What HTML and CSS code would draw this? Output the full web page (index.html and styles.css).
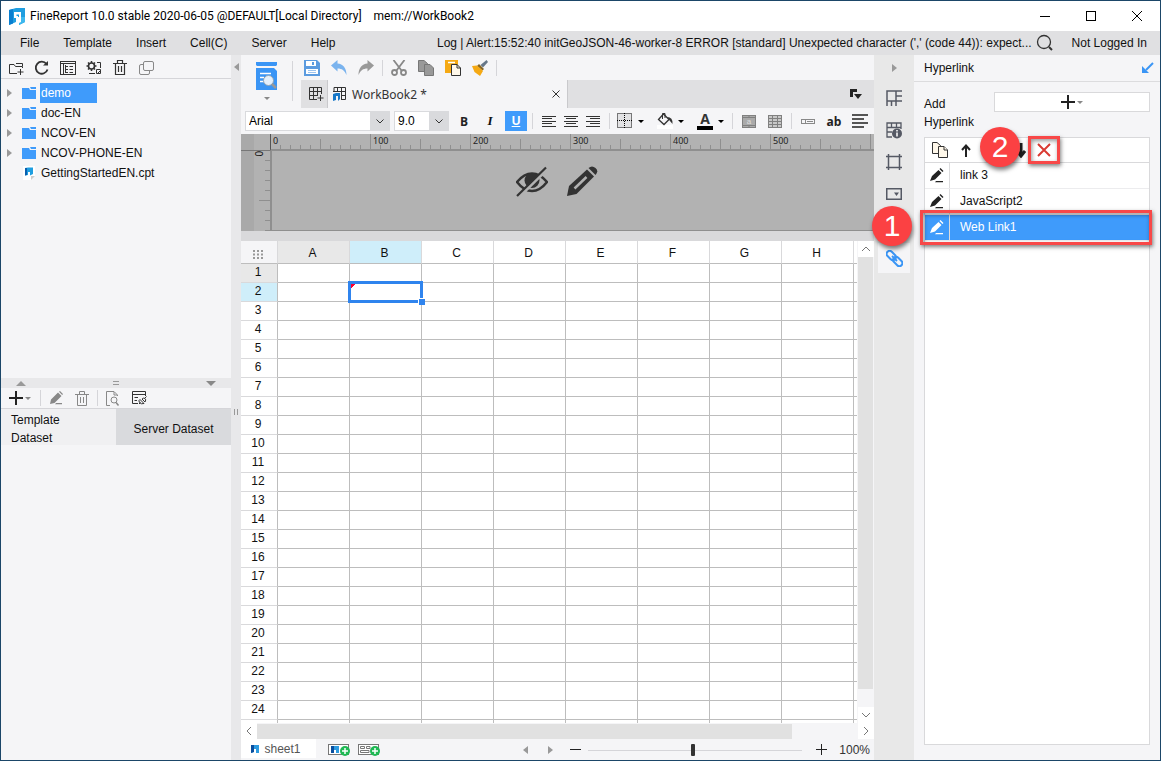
FILE: index.html
```html
<!DOCTYPE html>
<html lang="en">
<head>
    <meta charset="UTF-8">
    <meta name="viewport" content="width=device-width, initial-scale=1.0">
    <title>FineReport 10.0</title>
    <link rel="stylesheet" href="styles.css">
</head>

<body>

<div class="window">

    <header class="titlebar">
        <svg class="app-logo" width="16" height="17" viewBox="0 0 16 17">
            <path d="M0 2 L7 0 H16 V14 L10 17 V9 H7 V14 L0 17Z" fill="#1f9ee0"/>
            <path d="M0 2 L4 1 V15.500 L0 17Z" fill="#0a7fd0"/>
            <path d="M10 9 H16 V14 L10 17Z" fill="#3db8ee"/>
            <path d="M5 4 H12 V14 L10 15 V6.500 H7.500 V8 H9 V10 H5Z" fill="#fff"/>
        </svg>
        <h1 class="title">FineReport 10.0 stable 2020-06-05 @DEFAULT[Local Directory]&nbsp;&nbsp;&nbsp; mem://WorkBook2</h1>
        <div class="window-buttons">
            <button aria-label="Minimize"><svg width="12" height="12"><path d="M1 6.500H11" stroke="#000"/></svg></button>
            <button aria-label="Maximize"><svg width="12" height="12"><rect x="1.500" y="1.500" width="9" height="9" fill="none" stroke="#000"/></svg></button>
            <button aria-label="Close"><svg width="12" height="12"><path d="M1 1L11 11M11 1L1 11" stroke="#000"/></svg></button>
        </div>
    </header>

    <nav class="menubar">
        <button>File</button>
        <button>Template</button>
        <button>Insert</button>
        <button>Cell(C)</button>
        <button>Server</button>
        <button>Help</button>
        <p class="log">Log | Alert:15:52:40 initGeoJSON-46-worker-8 ERROR [standard] Unexpected character (',' (code 44)): expect...</p>
        <button class="search" aria-label="Search"><svg width="18" height="18" fill="none" stroke="#333" stroke-width="1.300"><circle cx="8" cy="8" r="6.500"/><path d="M13 13L16 16" stroke-width="2"/></svg></button>
        <button class="login">Not Logged In</button>
    </nav>

    <main class="workspace">

        <aside class="left">
            <div class="toolbar tree-tools">
                <button aria-label="New folder"><svg width="16" height="14" fill="none" stroke="#333"><path d="M9 12.500H1.500V3.500H6L7.500 5.500H14.500V7M8 2.500H14.500V5M12.500 8V14M9.500 11H15.500"/></svg></button>
                <button aria-label="Refresh"><svg width="16" height="16" fill="none" stroke="#333" stroke-width="1.800"><path d="M12.500 4A6 6 0 1 0 13.500 9.500"/><path d="M9 5.500H14V1Z" fill="#333" stroke="none"/></svg></button>
                <button aria-label="Show list"><svg width="16" height="14" fill="none" stroke="#333"><rect x=".5" y=".5" width="15" height="13"/><path d="M0 2.500H16M3.500 3V13M5.500 4V12M5.500 5.500H8M5.500 8.500H8M5.500 11.500H8M9.500 5.500H13M9.500 8.500H13M9.500 11.500H13"/></svg></button>
                <button aria-label="Settings"><svg width="16" height="14" fill="none" stroke="#333"><circle cx="5.500" cy="5" r="3" stroke-width="1.600"/><path d="M5.500 0V2M5.500 8V10M.5 5H2.500M8.500 5H10.500M2 1.500L3.500 3M7.500 7L9 8.500M9 1.500L7.500 3M3.500 7L2 8.500" stroke-width="1.500"/><path d="M11 1.500H14.500V7M3 12.500H9M10.500 8.500H14.500V12.500H10.500ZM12 12L15 9"/></svg></button>
                <button aria-label="Delete"><svg width="14" height="15" fill="none" stroke="#333"><path d="M0 3.500H14M4.500 3V.5H9.500V3M2.500 4V14.500H11.500V4M5.500 6V12M8.500 6V12" stroke-width="1.200"/></svg></button>
                <button aria-label="Copy"><svg width="15" height="14" fill="none" stroke="#888"><rect x="4.500" y=".5" width="10" height="9" rx="1.500"/><path d="M4 3.500H2Q.5 3.500 .5 5V12Q.5 13.500 2 13.500H9Q10.500 13.500 10.500 12V10"/></svg></button>
            </div>
            <ul class="tree">
                <li class="selected"><i class="tri-right"></i><svg width="14" height="12"><path d="M0 1H7L8 3H14V12H0Z" fill="#3f9bfb"/><path d="M8 0H14V2H9Z" fill="#3f9bfb"/></svg><span>demo</span></li>
                <li><i class="tri-right"></i><svg width="14" height="12"><path d="M0 1H7L8 3H14V12H0Z" fill="#3f9bfb"/><path d="M8 0H14V2H9Z" fill="#3f9bfb"/></svg><span>doc-EN</span></li>
                <li><i class="tri-right"></i><svg width="14" height="12"><path d="M0 1H7L8 3H14V12H0Z" fill="#3f9bfb"/><path d="M8 0H14V2H9Z" fill="#3f9bfb"/></svg><span>NCOV-EN</span></li>
                <li><i class="tri-right"></i><svg width="14" height="12"><path d="M0 1H7L8 3H14V12H0Z" fill="#3f9bfb"/><path d="M8 0H14V2H9Z" fill="#3f9bfb"/></svg><span>NCOV-PHONE-EN</span></li>
                <li><i></i><svg width="14" height="14"><path d="M1 0H13V10L9 14H1Z" fill="#fff"/><path d="M9 14V10H13Z" fill="#ccc"/><path d="M3 2L6 1.500H11V8L8 9.500V6H6V9L3 9.500Z" fill="#1f9ee0"/><path d="M3 2H5V9L3 9.500Z" fill="#0a5fae"/></svg><span>GettingStartedEN.cpt</span></li>
            </ul>
            <div class="h-splitter"><i class="tri-up"></i><svg width="8" height="6"><path d="M1 1.500H7M1 4.500H7" stroke="#999"/></svg><i class="tri-down big"></i></div>
            <div class="toolbar dataset-tools">
                <button class="add" aria-label="Add dataset"><svg width="14" height="14"><path d="M7 0V14M0 7H14" stroke="#222" stroke-width="2"/></svg><i class="tri-down"></i></button>
                <span class="sep"></span>
                <button aria-label="Edit"><svg width="15" height="14" fill="#888"><path d="M1 13L2 8.500L9 1.500L12.500 5L5.500 12ZM10 .8L11 0L14 3L13.200 4ZM7 12H13V13.200H6Z"/></svg></button>
                <button aria-label="Delete"><svg width="14" height="15" fill="none" stroke="#888"><path d="M0 3.500H14M4.500 3V.5H9.500V3M2.500 4V14.500H11.500V4M5.500 6V12M8.500 6V12"/></svg></button>
                <span class="sep"></span>
                <button aria-label="Preview"><svg width="14" height="15" fill="none" stroke="#888"><path d="M4 14.500H.5V.5H8L11.500 4V5M8 1V4H11"/><circle cx="8" cy="9" r="3"/><path d="M10 11.500L12.500 14.500" stroke-width="1.500"/></svg></button>
                <button aria-label="Connection"><svg width="15" height="14" fill="none" stroke="#333"><path d="M6 12.500H.5V.5H13.500V5M0 3.500H13.500M2.500 6.500H6M2.500 9.500H5"/><path d="M7 13L8.500 11.500M8 8.500L12 12.500Q9 13.500 7.500 11.500T8 8.500ZM10 8L13 11Q14.500 8.500 13 7.500T10 8ZM13 7L14.500 5.500"/></svg></button>
            </div>
            <div class="dataset-tabs">
                <button>Template Dataset</button>
                <button class="active">Server Dataset</button>
            </div>
        </aside>

        <div class="v-splitter"><i class="tri-left"></i><svg width="4" height="7"><path d="M.5 0V6M3.500 0V6" stroke="#999"/></svg></div>

        <section class="center">
            <div class="top-tools">
                <button class="preview" aria-label="Preview">
                    <svg width="22" height="28"><path d="M0 0H21V3L20 4H1L0 3ZM0 6H18L21 9V28H0Z" fill="#3a95f5"/><path d="M4 11.500H15M4 15.500H8M4 19.500H8" stroke="#fff" stroke-width="1.500"/><circle cx="12.500" cy="18.500" r="5" fill="#e4f0fc" stroke="#8fa3b5"/><path d="M16 22L20 26" stroke="#999" stroke-width="2.500"/></svg>
                    <i class="tri-down"></i>
                </button>
                <div class="top-right">
                    <div class="toolbar quick-tools">
                        <button aria-label="Save"><svg width="16" height="16"><path d="M0 0H13L16 3V16H0Z" fill="#5b9bdf"/><path d="M2 1H12V6H2ZM2 9H14V14H2Z" fill="#fff"/><path d="M8 2H10V5H8Z" fill="#5b9bdf"/><path d="M4 10.500H12M4 12.500H12" stroke="#9cc3ee"/></svg></button>
                        <button aria-label="Undo"><svg width="16" height="15"><path d="M0 5.500L6.500 0V3.500C12 4 15.500 8 15.500 15C13.500 10.500 11 8.500 6.500 8.500V11.500Z" fill="#7ab3ee"/></svg></button>
                        <button aria-label="Redo"><svg width="16" height="15"><path d="M16 5.500L9.500 0V3.500C4 4 .5 8 .5 15C2.500 10.500 5 8.500 9.500 8.500V11.500Z" fill="#999"/></svg></button>
                        <span class="sep"></span>
                        <button aria-label="Cut"><svg width="16" height="16" fill="none" stroke="#888" stroke-width="1.800"><circle cx="3.500" cy="12.500" r="2.500"/><circle cx="12.500" cy="12.500" r="2.500"/><path d="M2.500 0L10.500 10.500M13.500 0L5.500 10.500"/></svg></button>
                        <button aria-label="Copy"><svg width="17" height="16" fill="#999" stroke="#777"><path d="M.5 .5H6L9.500 3.500V11.500H.5Z"/><path d="M6.500 4.500H12L15.500 8V15.500H6.500Z"/></svg></button>
                        <button aria-label="Paste"><svg width="17" height="16"><path d="M0 0H13V13H0Z" fill="#f5a914"/><path d="M3 2.500H10" stroke="#fff" stroke-width="1.500"/><path d="M6.500 4.500H12L15.500 8V15.500H6.500Z" fill="#fff8ea" stroke="#333"/><path d="M12 4.500V8H15.500" fill="none" stroke="#333"/></svg></button>
                        <button aria-label="Format painter"><svg width="16" height="16"><path d="M14.500 0L16 2L11 7.500L8.500 5Z" fill="#667788"/><path d="M7 4L12 9L10.500 10.500L5 6Z" fill="#886622"/><path d="M0 6L5 5.500L11 11L8 16L2.500 12Z" fill="#f5a914"/></svg></button>
                        <span class="sep"></span>
                    </div>
                    <div class="file-tabs">
                        <button class="new-tab" aria-label="New workbook"><svg width="15" height="14" fill="none" stroke="#333"><path d="M8 12.500H.5V.5H12.500V7M0 4.500H13M0 8.500H8M4.500 0V13M8.500 0V9M11.500 8V14M8.500 11H14.500"/></svg></button>
                        <div class="file-tab">
                            <svg width="14" height="14" fill="none" stroke="#333"><path d="M1 5V.5H12.500V12.500H8M0 4.500H13M8 8.500H13M4.500 0V5M8.500 0V12"/><path d="M0 7L3 6H7V12L5 14V9H3V13L0 14Z" fill="#1878c8" stroke="none"/></svg>
                            <span>WorkBook2 *</span>
                            <button aria-label="Close tab"><svg width="8" height="8"><path d="M.5 .5L7.500 7.500M7.500 .5L.5 7.500" stroke="#333"/></svg></button>
                        </div>
                        <button class="tab-list" aria-label="Open tabs"><svg width="12" height="10" fill="#222"><path d="M0 0H7V3H3V8H0ZM4 5H12L8 10Z"/></svg></button>
                    </div>
                </div>
            </div>

            <div class="toolbar format-tools">
                <label class="combo font-name"><select aria-label="Font"><option>Arial</option></select><span><svg width="8" height="5" fill="none" stroke="#333"><path d="M.5 .5L4 4L7.500 .5"/></svg></span></label>
                <label class="combo font-size"><select aria-label="Font size"><option>9.0</option></select><span><svg width="8" height="5" fill="none" stroke="#333"><path d="M.5 .5L4 4L7.500 .5"/></svg></span></label>
                <button class="bold">B</button>
                <button class="italic">I</button>
                <button class="underline active">U</button>
                <span class="sep"></span>
                <div class="group">
                    <button aria-label="Align left"><svg width="14" height="11" stroke="#333"><path d="M0 .5H14M0 2.500H10M0 5.500H14M0 7.500H10M0 10.500H14"/></svg></button>
                    <button aria-label="Align center"><svg width="14" height="11" stroke="#333"><path d="M0 .5H14M2 2.500H12M0 5.500H14M2 7.500H12M0 10.500H14"/></svg></button>
                    <button aria-label="Align right"><svg width="14" height="11" stroke="#333"><path d="M0 .5H14M4 2.500H14M0 5.500H14M4 7.500H14M0 10.500H14"/></svg></button>
                </div>
                <span class="sep"></span>
                <div class="group drop-group">
                    <button class="drop" aria-label="Borders"><svg width="16" height="16" fill="#e2e2e4" stroke="#000" stroke-dasharray="1 1"><rect x=".5" y=".5" width="14" height="14"/><path d="M7.500 0V15M0 7.500H15"/></svg><i class="tri-down"></i></button>
                    <button class="drop" aria-label="Fill colour"><svg width="16" height="16"><path d="M0 12H16V16H0Z" fill="#fff"/><path d="M6.500 1L12 6.500L7 11.500L1.500 6.500Z" fill="none" stroke="#333" stroke-width="1.300"/><path d="M5.500 6V.5H8V5" fill="none" stroke="#333"/><path d="M10 4Q16 4 15.500 11L13 8L11.500 6Z" fill="#333"/></svg><i class="tri-down"></i></button>
                    <button class="drop font-color" aria-label="Font colour"><b>A</b><i class="tri-down"></i></button>
                </div>
                <span class="sep"></span>
                <button aria-label="Merge cells"><svg width="14" height="13" fill="#aaa" stroke="#808080"><rect x=".5" y=".5" width="13" height="12"/><path d="M0 2.500H14M0 10.500H14M7 0V2M7 11V13"/><text x="7" y="9" font-size="8" text-anchor="middle" fill="#ddd" stroke="none">a</text></svg></button>
                <button aria-label="Unmerge cells"><svg width="14" height="13" fill="#c8c8c8" stroke="#808080"><rect x=".5" y=".5" width="13" height="12"/><path d="M0 3.500H14M0 6.500H14M0 9.500H14M4.500 0V13M9.500 0V13"/></svg></button>
                <span class="sep"></span>
                <button aria-label="Cell widget"><svg width="14" height="5" fill="none" stroke="#888"><rect x=".5" y=".5" width="13" height="4"/><path d="M4.500 0V5M6 2.500H12"/></svg></button>
                <button class="text-ab">ab</button>
                <button aria-label="Paragraph"><svg width="16" height="14" stroke="#555" stroke-width="2"><path d="M0 1H16M0 5H12M0 9H16M0 13H12"/></svg></button>
            </div>

            <div class="param-pane">
                <div class="ruler-corner"></div>
                <div class="ruler-top" id="ruler"></div>
                <div class="ruler-side"><span>0</span></div>
                <div class="param-body">
                    <button aria-label="Hide parameter pane"><svg width="32" height="31" viewBox="0 0 32 31"><path d="M1 16Q8 7.500 16 7.500T31 16Q24 25 16 25T1 16Z" fill="none" stroke="#333" stroke-width="2.500"/><circle cx="16" cy="14.500" r="7.500" fill="#333"/><path d="M3 31L32 2.500" stroke="#b2b2b2" stroke-width="3"/><path d="M1 30L30 1.500" stroke="#333" stroke-width="2.200"/></svg></button>
                    <button aria-label="Edit parameter pane"><svg width="31" height="31" viewBox="0 0 31 31"><path d="M0 30L2 20L20 3.500L27 10.500L9.500 28Z" fill="#333"/><path d="M21.500 2Q25-1 28.500 2T28.500 9Z" fill="#333"/><path d="M7.500 22.500L19.500 11" stroke="#b2b2b2" stroke-width="2.500"/></svg></button>
                </div>
            </div>

            <div class="grid-pane">
                <div class="grid-scroll">
                    <table class="grid">
                        <thead><tr id="grid-head"></tr></thead>
                        <tbody id="grid-body"></tbody>
                    </table>
                </div>
                <div class="v-scroll">
                    <button aria-label="Scroll up"><svg width="10" height="6" fill="none" stroke="#777"><path d="M1 5L5 1L9 5"/></svg></button>
                    <div class="track"><div class="thumb"></div></div>
                    <button aria-label="Scroll down"><svg width="10" height="6" fill="none" stroke="#777"><path d="M1 1L5 5L9 1"/></svg></button>
                </div>
            </div>
            <div class="h-scroll">
                <button aria-label="Scroll left"><svg width="6" height="10" fill="none" stroke="#777"><path d="M5 1L1 5L5 9"/></svg></button>
                <div class="track"><div class="thumb"></div></div>
                <button aria-label="Scroll right"><svg width="6" height="10" fill="none" stroke="#777"><path d="M1 1L5 5L1 9"/></svg></button>
            </div>

            <div class="sheetbar">
                <button class="sheet-tab"><svg width="8" height="9"><path d="M0 1H8V9H5V5H3V8L0 9Z" fill="#2d9be0"/><path d="M0 1H3V8L0 9Z" fill="#0a4fa0"/></svg>sheet1</button>
                <button aria-label="Add report sheet"><svg width="23" height="13"><rect x=".5" y="1.500" width="20" height="10" fill="#fff" stroke="#777"/><path d="M3 3H11V10H8V7H6V10H3Z" fill="#2d9be0"/><path d="M3 3H6V10H3Z" fill="#0a4fa0"/><circle cx="17" cy="8" r="5" fill="#1fb954"/><path d="M17 5V11M14 8H20" stroke="#fff" stroke-width="1.500"/></svg></button>
                <button aria-label="Add form sheet"><svg width="23" height="13"><rect x=".5" y="1.500" width="20" height="10" fill="#fff" stroke="#777"/><path d="M2.500 3.500H6.500V5.500H2.500ZM8.500 3.500H12V5.500H8.500ZM2.500 7.500H11V9.500H2.500Z" fill="none" stroke="#777"/><circle cx="17" cy="8" r="5" fill="#1fb954"/><path d="M17 5V11M14 8H20" stroke="#fff" stroke-width="1.500"/></svg></button>
                <div class="zoom">
                    <button aria-label="Previous sheet"><i class="tri-left"></i></button>
                    <button aria-label="Next sheet"><i class="tri-right"></i></button>
                    <button aria-label="Zoom out"><svg width="11" height="11"><path d="M0 5.500H11" stroke="#222"/></svg></button>
                    <input type="range" aria-label="Zoom" min="10" max="190" value="98">
                    <button aria-label="Zoom in"><svg width="11" height="11"><path d="M0 5.500H11M5.500 0V11" stroke="#222"/></svg></button>
                    <output>100%</output>
                </div>
            </div>
        </section>

        <nav class="side-strip">
            <button class="collapse" aria-label="Collapse"><i class="tri-right"></i></button>
            <button aria-label="Cell element"><svg width="16" height="17" fill="none" stroke="#555964" stroke-width="1.500"><path d="M10 11H1V1H16M10 1V11M10 6H16M10 11H16M1 11V16M5.500 11V16M10 11V16"/></svg></button>
            <button aria-label="Cell attributes"><svg width="16" height="17" fill="none" stroke="#555964" stroke-width="1.300"><path d="M6 15H1V1H15V7M1 5.500H15M1 10H6M5.500 1V6M10.500 1V6"/><circle cx="11" cy="11.500" r="5" fill="#555964" stroke="none"/><path d="M11 10.500V14.500M11 8V9.500" stroke="#fff" stroke-width="1.500"/></svg></button>
            <button aria-label="Floating element"><svg width="16" height="16" fill="none" stroke="#555964" stroke-width="1.500"><path d="M2.500 0V16M13.500 0V16M0 2.500H16M0 13.500H16"/></svg></button>
            <button aria-label="Widget settings"><svg width="16" height="12" fill="none" stroke="#555964" stroke-width="1.500"><rect x=".75" y=".75" width="14.500" height="10.500"/><path d="M8 4.500H13L10.500 8Z" fill="#555964" stroke="none"/></svg></button>
            <button aria-label="Condition attributes"><span class="badge">1</span></button>
            <button class="active" aria-label="Hyperlink"><svg width="17" height="17" viewBox="0 0 17 17" fill="none" stroke="#3a95f5" stroke-width="2"><rect x="0" y="2.500" width="10.500" height="6" rx="3" transform="rotate(45 5.250 5.500)"/><rect x="6.500" y="8.500" width="10.500" height="6" rx="3" transform="rotate(45 11.750 11.500)"/><path d="M6 6L11 11" stroke-width="1.800"/></svg></button>
        </nav>

        <aside class="right">
            <header class="panel-head">
                <h2>Hyperlink</h2>
                <button aria-label="Dock panel"><svg width="12" height="12"><path d="M11 1L4 8" stroke="#3a95f5" stroke-width="2"/><path d="M0 4V11H7Z" fill="#3a95f5"/></svg></button>
            </header>
            <div class="add-row">
                <label for="add-link">Add Hyperlink</label>
                <button id="add-link"><svg width="14" height="14"><path d="M7 0V14M0 7H14" stroke="#222" stroke-width="2"/></svg><i class="tri-down"></i></button>
            </div>
            <div class="link-box">
                <div class="toolbar link-tools">
                    <button aria-label="Copy"><svg width="17" height="16" fill="#fff8ea" stroke="#333"><path d="M.5 .5H5L8.500 3.500V11.500H.5Z"/><path d="M6.500 4.500H12L15.500 8V15.500H6.500Z"/><path d="M12 4.500V8H15.500"/></svg></button>
                    <button aria-label="Move up"><svg width="10" height="13"><path d="M5 13V2M1 6L5 1.500L9 6" fill="none" stroke="#222" stroke-width="2"/></svg></button>
                    <button class="covered" aria-label="Sort"><span class="badge">2</span></button>
                    <button aria-label="Move down"><svg width="10" height="15"><path d="M5 0V12M1 8L5 13L9 8" fill="none" stroke="#222" stroke-width="3"/></svg></button>
                    <button class="delete marked" aria-label="Delete"><svg width="14" height="14"><path d="M1 1L13 13M13 1L1 13" stroke="#d93a32" stroke-width="2"/></svg></button>
                </div>
                <ul class="links">
                    <li><button aria-label="Edit link 3"><svg width="14" height="15" fill="#222"><path d="M0 13L2 8L8.500 2L11.500 5L5 11.500ZM9.500 1L10.500 0L13.500 3L12.500 4ZM6 13H13V14.200H5Z"/></svg></button><span>link 3</span></li>
                    <li><button aria-label="Edit JavaScript2"><svg width="14" height="15" fill="#222"><path d="M0 13L2 8L8.500 2L11.500 5L5 11.500ZM9.500 1L10.500 0L13.500 3L12.500 4ZM6 13H13V14.200H5Z"/></svg></button><span>JavaScript2</span></li>
                    <li class="selected marked"><button aria-label="Edit Web Link1"><svg width="14" height="15" fill="#fff"><path d="M0 13L2 8L8.500 2L11.500 5L5 11.500ZM9.500 1L10.500 0L13.500 3L12.500 4ZM6 13H13V14.200H5Z"/></svg></button><span>Web Link1</span></li>
                </ul>
            </div>
        </aside>

    </main>
</div>

<script src="script.js"></script>
</body>
</html>
```
FILE: styles.css
```css
* {
    box-sizing: border-box;
}

html, body {
    height: 100%;
    margin: 0;
}

body {
    font-family: "Liberation Sans", Arial, sans-serif;
    font-size: 12px;
    color: #111;
}

button {
    display: flex;
    align-items: center;
    justify-content: center;
    padding: 0;
    border: none;
    background: none;
    font: inherit;
    color: inherit;
}

h1, h2, p, ul {
    margin: 0;
    padding: 0;
    font-size: 12px;
    font-weight: normal;
    list-style: none;
}

svg {
    display: block;
    flex-shrink: 0;
}

.window {
    display: flex;
    flex-direction: column;
    height: 100%;
    border: 1px solid #1b4668;
    background: #f5f5f7;
    overflow: hidden;
}

/* title and menu */

.titlebar {
    display: flex;
    align-items: center;
    height: 30px;
    padding-left: 8px;
    background: #fff;
}

.title {
    flex: 1;
    margin-left: 5px;
    font-family: Roboto, sans-serif;
    color: #000;
}

.window-buttons {
    display: flex;
}

.window-buttons button {
    width: 46px;
    height: 30px;
}

.menubar {
    display: flex;
    align-items: center;
    gap: 24px;
    height: 24px;
    padding: 0 13px 0 19px;
    background: #e0e0e2;
    white-space: nowrap;
}

.log {
    margin-left: auto;
}

.menubar .search {
    margin: 0 -6px 0 -20px;
}

.workspace {
    display: flex;
    flex: 1;
    min-height: 0;
}

/* shared bits */

.toolbar {
    display: flex;
    align-items: center;
    gap: 4px;
}

.toolbar button {
    width: 22px;
    height: 20px;
    flex-shrink: 0;
}

.sep {
    width: 1px;
    height: 16px;
    background: #d5d5d9;
}

.group {
    display: flex;
}

.tri-right, .tri-left, .tri-up, .tri-down {
    width: 0;
    height: 0;
    border: 4px solid transparent;
}

.tri-right {
    border-left: 5px solid #999;
    border-right: 0;
}

.tri-left {
    border-right: 5px solid #999;
    border-left: 0;
}

.tri-up {
    border: 5px solid transparent;
    border-bottom-color: #999;
    border-top: 0;
}

.tri-down {
    border: 3px solid transparent;
    border-top-color: #888;
    border-bottom: 0;
}

.tri-down.big {
    border-width: 5px 5px 0;
}

.badge {
    position: absolute;
    width: 40px;
    height: 40px;
    border-radius: 50%;
    background: #fb4143;
    color: #fff;
    font-size: 30px;
    line-height: 40px;
    text-align: center;
    box-shadow: 1px 3px 4px rgba(0, 0, 0, 0.5);
    z-index: 3;
}

.marked {
    position: relative;
}

.marked::after {
    content: "";
    position: absolute;
    border: 3px solid #f84848;
    box-shadow: 1px 2px 4px rgba(0, 0, 0, 0.5), inset 1px 2px 4px rgba(0, 0, 0, 0.4);
    z-index: 2;
}

/* left side */

.left {
    display: flex;
    flex-direction: column;
    width: 230px;
}

.tree-tools {
    height: 24px;
    padding: 2px 4px 0;
    border-bottom: 1px solid #d5d5d9;
}

.tree {
    flex: 0 0 299px;
    padding-top: 4px;
}

.tree li {
    display: flex;
    align-items: center;
    height: 20px;
    padding-left: 6px;
}

.tree li i {
    margin-right: 10px;
}

.tree li i:not([class]) {
    width: 5px;
}

.tree span {
    margin-left: 4px;
    padding-left: 1px;
    line-height: 20px;
}

.tree .selected span {
    width: 57px;
    background: #3f9bfb;
    color: #fff;
}

.h-splitter {
    display: flex;
    align-items: center;
    justify-content: space-between;
    height: 10px;
    padding: 0 15px;
    background: #e8e8ea;
}

.dataset-tools {
    height: 21px;
    padding-left: 5px;
    border-bottom: 1px solid #d5d5d9;
}

.dataset-tools .add {
    width: 30px;
    gap: 2px;
    padding-right: 2px;
}

.dataset-tabs {
    display: flex;
    height: 36px;
}

.dataset-tabs button {
    width: 50%;
    padding: 4px 40px 0 10px;
    line-height: 18px;
    text-align: left;
    background: #f0f0f2;
}

.dataset-tabs .active {
    padding: 4px 0 0;
    background: #d9dadd;
}

.v-splitter {
    display: flex;
    flex-direction: column;
    align-items: center;
    width: 10px;
    padding-top: 8px;
    gap: 338px;
    background: #e8e8ea;
}

/* centre */

.center {
    display: flex;
    flex-direction: column;
    flex: 1;
    min-width: 0;
}

.top-tools {
    display: flex;
}

.preview {
    flex-direction: column;
    width: 52px;
    height: 40px;
    margin: 6px 8px 0 0;
    gap: 7px;
    border-right: 1px solid #d5d5d9;
}

.top-right {
    flex: 1;
}

.quick-tools {
    gap: 5px;
    height: 25px;
}

.file-tabs {
    display: flex;
    height: 28px;
    background: #e0e0e2;
}

.new-tab {
    width: 27px;
    padding-left: 5px;
    border-right: 1px solid #c9c9cc;
}

.file-tab {
    display: flex;
    align-items: center;
    width: 240px;
    padding: 0 3px 0 5px;
    gap: 5px;
    background: #f5f5f7;
    border-right: 1px solid #c9c9cc;
    font-family: "Noto Sans", sans-serif;
    color: #333;
}

.file-tab button {
    width: 16px;
    height: 16px;
    margin-left: auto;
}

.tab-list {
    width: 36px;
    margin-left: auto;
}

.format-tools {
    height: 26px;
    padding-left: 4px;
}

.format-tools > .sep {
    margin: 0 1px;
}

.combo {
    display: flex;
    height: 20px;
    border: 1px solid #d9dadd;
    background: #fff;
}

.combo select {
    flex: 1;
    min-width: 0;
    padding: 0 0 0 3px;
    border: none;
    appearance: none;
    background: none;
    font: inherit;
    color: #000;
}

.combo span {
    display: flex;
    align-items: center;
    justify-content: center;
    width: 19px;
    background: #d9dadd;
}

.font-name {
    width: 145px;
}

.font-size {
    width: 55px;
}

.bold, .text-ab {
    font-family: "Open Sans", sans-serif;
    font-weight: bold;
    color: #222;
}

.italic {
    font-family: "Liberation Serif", serif;
    font-size: 13px;
    font-weight: bold;
    font-style: italic;
}

.underline {
    font-weight: bold;
    text-decoration: underline;
    background: #3f9bfb;
    color: #fff;
}

.drop-group {
    gap: 8px;
}

.toolbar .drop {
    width: 32px;
    justify-content: flex-start;
    padding-left: 2px;
    gap: 5px;
}

.drop .tri-down {
    border-top-color: #000;
}

.font-color b {
    width: 16px;
    height: 17px;
    border-bottom: 4px solid #000;
    font-family: "Open Sans", sans-serif;
    font-size: 14px;
    line-height: 12px;
    color: #333;
}

.param-pane {
    display: grid;
    grid-template-columns: 29px 1fr;
    grid-template-rows: 17px 80px;
    background: #b2b2b2;
    border-bottom: 1px solid #d9d9db;
    overflow: hidden;
}

.ruler-corner {
    background: linear-gradient(90deg, #a9a9a9 13px, #b2b2b2 13px);
    border-bottom: 1px solid #777;
}

.ruler-top {
    display: flex;
    min-width: 0;
    overflow: hidden;
    border-left: 1px solid #555;
    border-bottom: 2px solid #8f8f8f;
    background:
        repeating-linear-gradient(90deg, transparent 0 99px, #8f8f8f 99px 100px) 0 0 / 100% 15px no-repeat,
        repeating-linear-gradient(90deg, transparent 0 49px, #8f8f8f 49px 50px) 0 5px / 100% 10px no-repeat,
        repeating-linear-gradient(90deg, transparent 0 9px, #8f8f8f 9px 10px) 0 11px / 100% 4px no-repeat;
}

.ruler-top span {
    flex: 0 0 100px;
    padding-left: 2px;
    font-family: "Noto Sans", sans-serif;
    font-size: 9px;
    line-height: 14px;
    color: #222;
}

.ruler-side {
    background:
        repeating-linear-gradient(180deg, transparent 0 9px, #8f8f8f 9px 10px) 24px 0 / 5px 100% no-repeat,
        linear-gradient(#8f8f8f, #8f8f8f) 18px 49px / 11px 1px no-repeat,
        linear-gradient(90deg, #a9a9a9 13px, #b2b2b2 13px);
}

.ruler-side span {
    display: block;
    width: 12px;
    margin-left: 13px;
    font-size: 10px;
    line-height: 12px;
    writing-mode: vertical-rl;
    transform: rotate(180deg);
}

.param-body {
    display: flex;
    justify-content: center;
    gap: 19px;
    padding: 15px 32px 0 0;
    border-left: 2px solid #8f8f8f;
    border-bottom: 1px solid #8f8f8f;
}

.param-body button {
    height: 31px;
}

.grid-pane {
    display: flex;
    flex: 1;
    min-height: 0;
    border-top: 9px solid #d9d9db;
}

.grid-scroll {
    flex: 1;
    min-width: 0;
    overflow: hidden;
    background: #fff;
}

.grid {
    width: 685px;
    table-layout: fixed;
    border-collapse: separate;
    border-spacing: 0;
}

.grid th, .grid td {
    position: relative;
    height: 19px;
    padding: 0;
    border-right: 1px solid #bdbdbd;
    border-bottom: 1px solid #bdbdbd;
    font-weight: normal;
    line-height: 16px;
    text-align: center;
}

.grid tbody th {
    border-bottom-color: #d9d9db;
    padding: 0 2px 2px 0;
}

.grid thead th {
    width: 72px;
    height: 23px;
    padding: 2px 2px 0 0;
    border-right-color: #d9d9db;
}

.grid thead .corner {
    width: 37px;
    background: #f5f5f7;
}

.corner svg {
    margin: 3px auto 0;
}

.grid .origin {
    background: #e8e8e8;
}

.grid .current {
    background: #cfeefa;
}

.cell-cursor {
    position: absolute;
    inset: -2px;
    border: 3px solid #2f84ee;
    background: linear-gradient(135deg, #f03 3px, transparent 3px);
    z-index: 1;
}

.cell-cursor::after {
    content: "";
    position: absolute;
    right: -5px;
    bottom: -5px;
    width: 6px;
    height: 6px;
    border: 1px solid #fff;
    border-width: 1px 0 0 1px;
    background: #2f84ee;
}

.v-scroll {
    display: flex;
    flex-direction: column;
    width: 17px;
    padding-left: 1px;
}

.v-scroll button, .h-scroll button {
    width: 16px;
    height: 16px;
    background: #fff;
}

.track {
    flex: 1;
}

.v-scroll .thumb {
    width: 15px;
    height: 96%;
    background: #e1e1e1;
}

.h-scroll {
    display: flex;
    height: 16px;
}

.h-scroll .thumb {
    width: 89%;
    height: 15px;
    margin-top: 1px;
    background: #e1e1e1;
}

.sheetbar {
    display: flex;
    gap: 7px;
    height: 21px;
}

.sheet-tab {
    width: 75px;
    height: 19px;
    margin-right: 5px;
    padding-right: 5px;
    gap: 5px;
    background: #fff;
    color: #555;
}

.zoom {
    display: flex;
    align-items: center;
    margin-left: auto;
    padding-right: 4px;
}

.zoom button {
    width: 25px;
    height: 20px;
}

.zoom input {
    width: 214px;
    height: 20px;
    margin: 0 7px 0 0;
    appearance: none;
    background: linear-gradient(#d5d5d9, #d5d5d9) 0 10px / 100% 1px no-repeat;
}

.zoom input::-webkit-slider-thumb {
    appearance: none;
    width: 4px;
    height: 12px;
    border-radius: 1px;
    background: #333;
}

.zoom output {
    margin-left: 5px;
    font-size: 12px;
    color: #333;
}

/* right side */

.side-strip {
    display: flex;
    flex-direction: column;
    align-items: center;
    width: 40px;
    gap: 2px;
    background: #e8e8e8;
}

.side-strip button {
    width: 32px;
    height: 30px;
}

.side-strip .collapse {
    height: 26px;
}

.side-strip .active {
    background: #f5f5f7;
}

.side-strip .badge {
    margin-right: 4px;
}

.right {
    display: flex;
    flex-direction: column;
    width: 246px;
}

.panel-head {
    display: flex;
    align-items: center;
    justify-content: space-between;
    height: 27px;
    padding: 0 6px 0 10px;
    border-bottom: 1px solid #dcdcde;
}

.add-row {
    display: flex;
    padding: 10px 10px 0;
}

.add-row label {
    width: 70px;
    padding-top: 3px;
    line-height: 18px;
}

.add-row button {
    flex: 1;
    height: 20px;
    gap: 2px;
    border: 1px solid #d9d9db;
    background: #fff;
}

.link-box {
    flex: 1;
    margin: 6px 10px 15px;
    border: 1px solid #d9d9db;
    background: #fff;
}

.link-tools {
    height: 25px;
    padding-left: 4px;
    border-bottom: 1px solid #d9d9db;
}

.link-tools .covered {
    margin-left: 8px;
}

.link-tools .badge {
    margin-bottom: 6px;
}

.link-tools button:nth-child(4) {
    margin-left: -5px;
}

.link-tools .delete {
    margin-left: -3px;
}

.delete.marked::after {
    inset: -4px -5px;
}

.links li {
    display: flex;
    height: 26px;
    border-bottom: 1px solid #ececee;
}

.links button {
    width: 25px;
    border-right: 1px solid #dcdcde;
}

.links span {
    padding-left: 10px;
    line-height: 24px;
}

.links .selected {
    background: #3f9bfb;
    color: #fff;
}

.links .marked::after {
    inset: -5px -3px -5px -5px;
}
```
FILE: script.js
```js
const columns = ['A', 'B', 'C', 'D', 'E', 'F', 'G', 'H', ''];
const rowCount = 24;

const head = document.getElementById('grid-head');
head.innerHTML = '<th class="corner"><svg width="11" height="9" fill="none" stroke="#999" stroke-width="2" stroke-dasharray="2 2"><path d="M0 1H11M0 4.500H11M0 8H11"/></svg></th>';
columns.forEach(name => {
    const cls = name === 'A' ? 'origin' : name === 'B' ? 'current' : '';
    head.innerHTML += `<th class="${cls}">${name}</th>`;
});

// one unlabelled row after the last closes off the bottom edge
let rows = '';
for (let r = 1; r <= rowCount + 1; r++) {
    const cls = r === 1 ? 'origin' : r === 2 ? 'current' : '';
    rows += `<tr><th class="${cls}">${r <= rowCount ? r : ''}</th>`;
    columns.forEach(name => {
        rows += r === 2 && name === 'B' ? '<td><div class="cell-cursor"></div></td>' : '<td></td>';
    });
    rows += '</tr>';
}
document.getElementById('grid-body').innerHTML = rows;

const ruler = document.getElementById('ruler');
for (let x = 0; x <= 500; x += 100) {
    ruler.innerHTML += `<span>${x}</span>`;
}
```
